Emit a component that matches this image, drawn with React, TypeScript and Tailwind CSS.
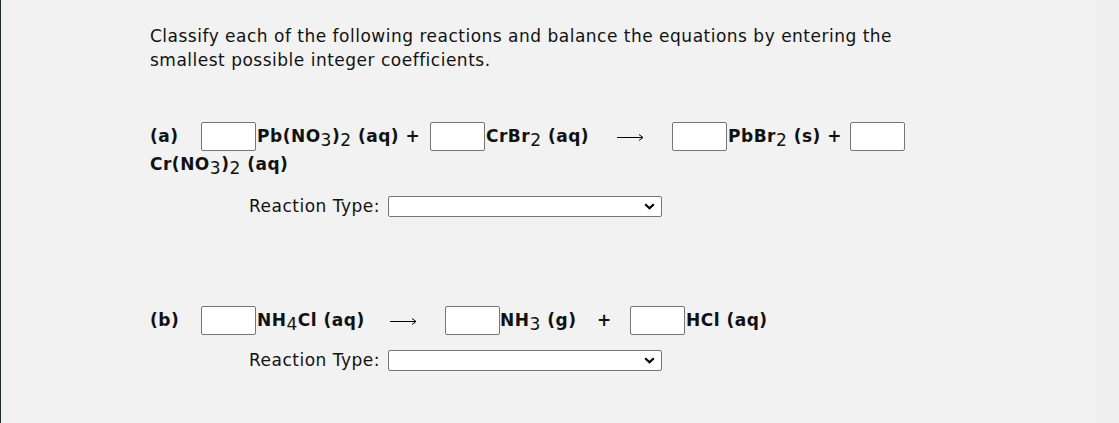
import React from 'react';

const font = "font-['DejaVu_Sans',Verdana,sans-serif]";

function Box() {
  return (
    <input
      type="text"
      aria-label="coefficient"
      className="h-[29px] w-[55px] shrink-0 rounded-[2px] border border-[#767676] bg-white"
    />
  );
}

function Sub({ n }: { n: string }) {
  return <span className="relative top-[4px] font-normal">{n}</span>;
}

function Arrow() {
  return (
    <svg width="27" height="10" viewBox="0 0 27 10" className="shrink-0">
      <path d="M0 5.5H25.5" stroke="#000" strokeWidth="1" />
      <path d="M22 2.5L26 5.5L22 8.5" stroke="#000" strokeWidth="1" fill="none" />
    </svg>
  );
}

function ReactionType({ className }: { className: string }) {
  return (
    <div className={`flex h-[21px] items-center pl-[99px] ${className}`}>
      <span className="w-[139px] shrink-0">Reaction Type:</span>
      <div className="flex h-[21px] w-[274px] items-center justify-end rounded-[2px] border border-[#767676] bg-white pr-[6px]">
        <svg width="11" height="7" viewBox="0 0 11 7">
          <path d="M1.2 1.2L5.5 5.3L9.8 1.2" stroke="#000" strokeWidth="2.2" fill="none" />
        </svg>
      </div>
    </div>
  );
}

export default function App() {
  return (
    <div className={`flex h-[423px] w-full border-l border-[#1c2a30] bg-[#f2f2f2] text-[17px] tracking-[0.5px] text-[#111] ${font}`}>
      <div className="flex-1 pl-[149px] pt-[24px]">
        <p className="w-[765px] leading-[24px]">
          Classify each of the following reactions and balance the equations by entering the smallest possible
          integer coefficients.
        </p>

        {/* (a) */}
        <div className="mt-[50px] flex h-[29px] items-center font-bold">
          <span className="w-[51px] shrink-0">(a)</span>
          <Box />
          <span className="ml-px w-[173px] shrink-0">
            Pb(NO<Sub n="3" />)<Sub n="2" /> (aq) +
          </span>
          <Box />
          <span className="ml-px w-[131px] shrink-0">
            CrBr<Sub n="2" /> (aq)
          </span>
          <Arrow />
          <span className="w-[28px] shrink-0" />
          <Box />
          <span className="ml-px w-[122px] shrink-0">
            PbBr<Sub n="2" /> (s) +
          </span>
          <Box />
        </div>
        <div className="flex h-[28px] items-center font-bold">
          <span>
            Cr(NO<Sub n="3" />)<Sub n="2" /> (aq)
          </span>
        </div>

        <ReactionType className="mt-[17px]" />

        {/* (b) */}
        <div className="mt-[89px] flex h-[29px] items-center font-bold">
          <span className="w-[51px] shrink-0">(b)</span>
          <Box />
          <span className="ml-px w-[133px] shrink-0">
            NH<Sub n="4" />Cl (aq)
          </span>
          <Arrow />
          <span className="w-[28px] shrink-0" />
          <Box />
          <span className="w-[97px] shrink-0">
            NH<Sub n="3" /> (g)
          </span>
          <span className="w-[33px] shrink-0">+</span>
          <Box />
          <span className="ml-px">HCl (aq)</span>
        </div>

        <ReactionType className="mt-[15px]" />
      </div>
      <div className="w-[24px] shrink-0 bg-[#efefef]" />
    </div>
  );
}
